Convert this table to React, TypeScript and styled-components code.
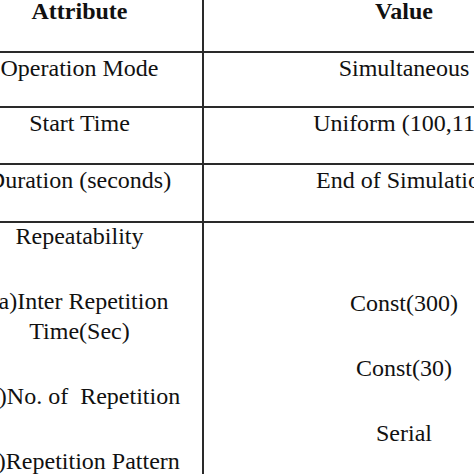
import styled, {createGlobalStyle} from "styled-components";
import {FC} from "react";

const GlobalStyle = createGlobalStyle`
    html, body {
        margin: 0;
        padding: 0;
        background: #fff;
    }

    body {
        overflow: hidden;
    }

    #root {
        width: 474px;
        height: 474px;
        overflow: hidden;
    }
`;

// the table is wider than the picture, left column starts off-screen
const Table = styled.div`
    width: 647px;
    margin: -4px 0 0 -43px;
    font-family: "Liberation Serif", "Times New Roman", serif;
    font-size: 24px;
    line-height: 30px;
    color: #111;
`;

const Row = styled.div<{ $height: number; $last?: boolean }>`
    display: grid;
    grid-template-columns: 247px 400px;
    height: ${(p) => p.$height}px;
    border-bottom: ${(p) => (p.$last ? "none" : "2px solid #2a2a2a")};
`;

const Cell = styled.div<{ $head?: boolean }>`
    text-align: center;
    font-weight: ${(p) => (p.$head ? 700 : 400)};

    &:first-child {
        border-right: 2px solid #2a2a2a;
    }
`;

const Stack = styled.div<{ $top: number }>`
    display: flex;
    flex-direction: column;
    gap: 35px;
    margin-top: ${(p) => p.$top}px;
`;

const Line = styled.div`
    white-space: nowrap;
`;

type SimpleRow = {
    attr: string;
    value: string;
    height: number;
};

const rows: SimpleRow[] = [
    {attr: "Operation Mode", value: "Simultaneous", height: 53},
    {attr: "Start Time", value: "Uniform (100,110)", height: 55},
    {attr: "Duration (seconds)", value: "End of Simulation", height: 56},
];

const App: FC = () => {
    return (
        <>
            <GlobalStyle/>
            <Table>
                <Row $height={55}>
                    <Cell $head>Attribute</Cell>
                    <Cell $head>Value</Cell>
                </Row>

                {rows.map((r) => (
                    <Row key={r.attr} $height={r.height}>
                        <Cell><Line>{r.attr}</Line></Cell>
                        <Cell><Line>{r.value}</Line></Cell>
                    </Row>
                ))}

                <Row $height={260} $last>
                    <Cell>
                        <Stack $top={-2}>
                            <Line>Repeatability</Line>
                            <div>
                                <Line>(a)Inter Repetition</Line>
                                <Line>Time(Sec)</Line>
                            </div>
                            <Line>(b)No. of{"\u00a0"} Repetition</Line>
                            <Line>(c)Repetition Pattern</Line>
                        </Stack>
                    </Cell>
                    <Cell>
                        <Stack $top={65}>
                            <Line>Const(300)</Line>
                            <Line>Const(30)</Line>
                            <Line>Serial</Line>
                        </Stack>
                    </Cell>
                </Row>
            </Table>
        </>
    );
};

export default App;
